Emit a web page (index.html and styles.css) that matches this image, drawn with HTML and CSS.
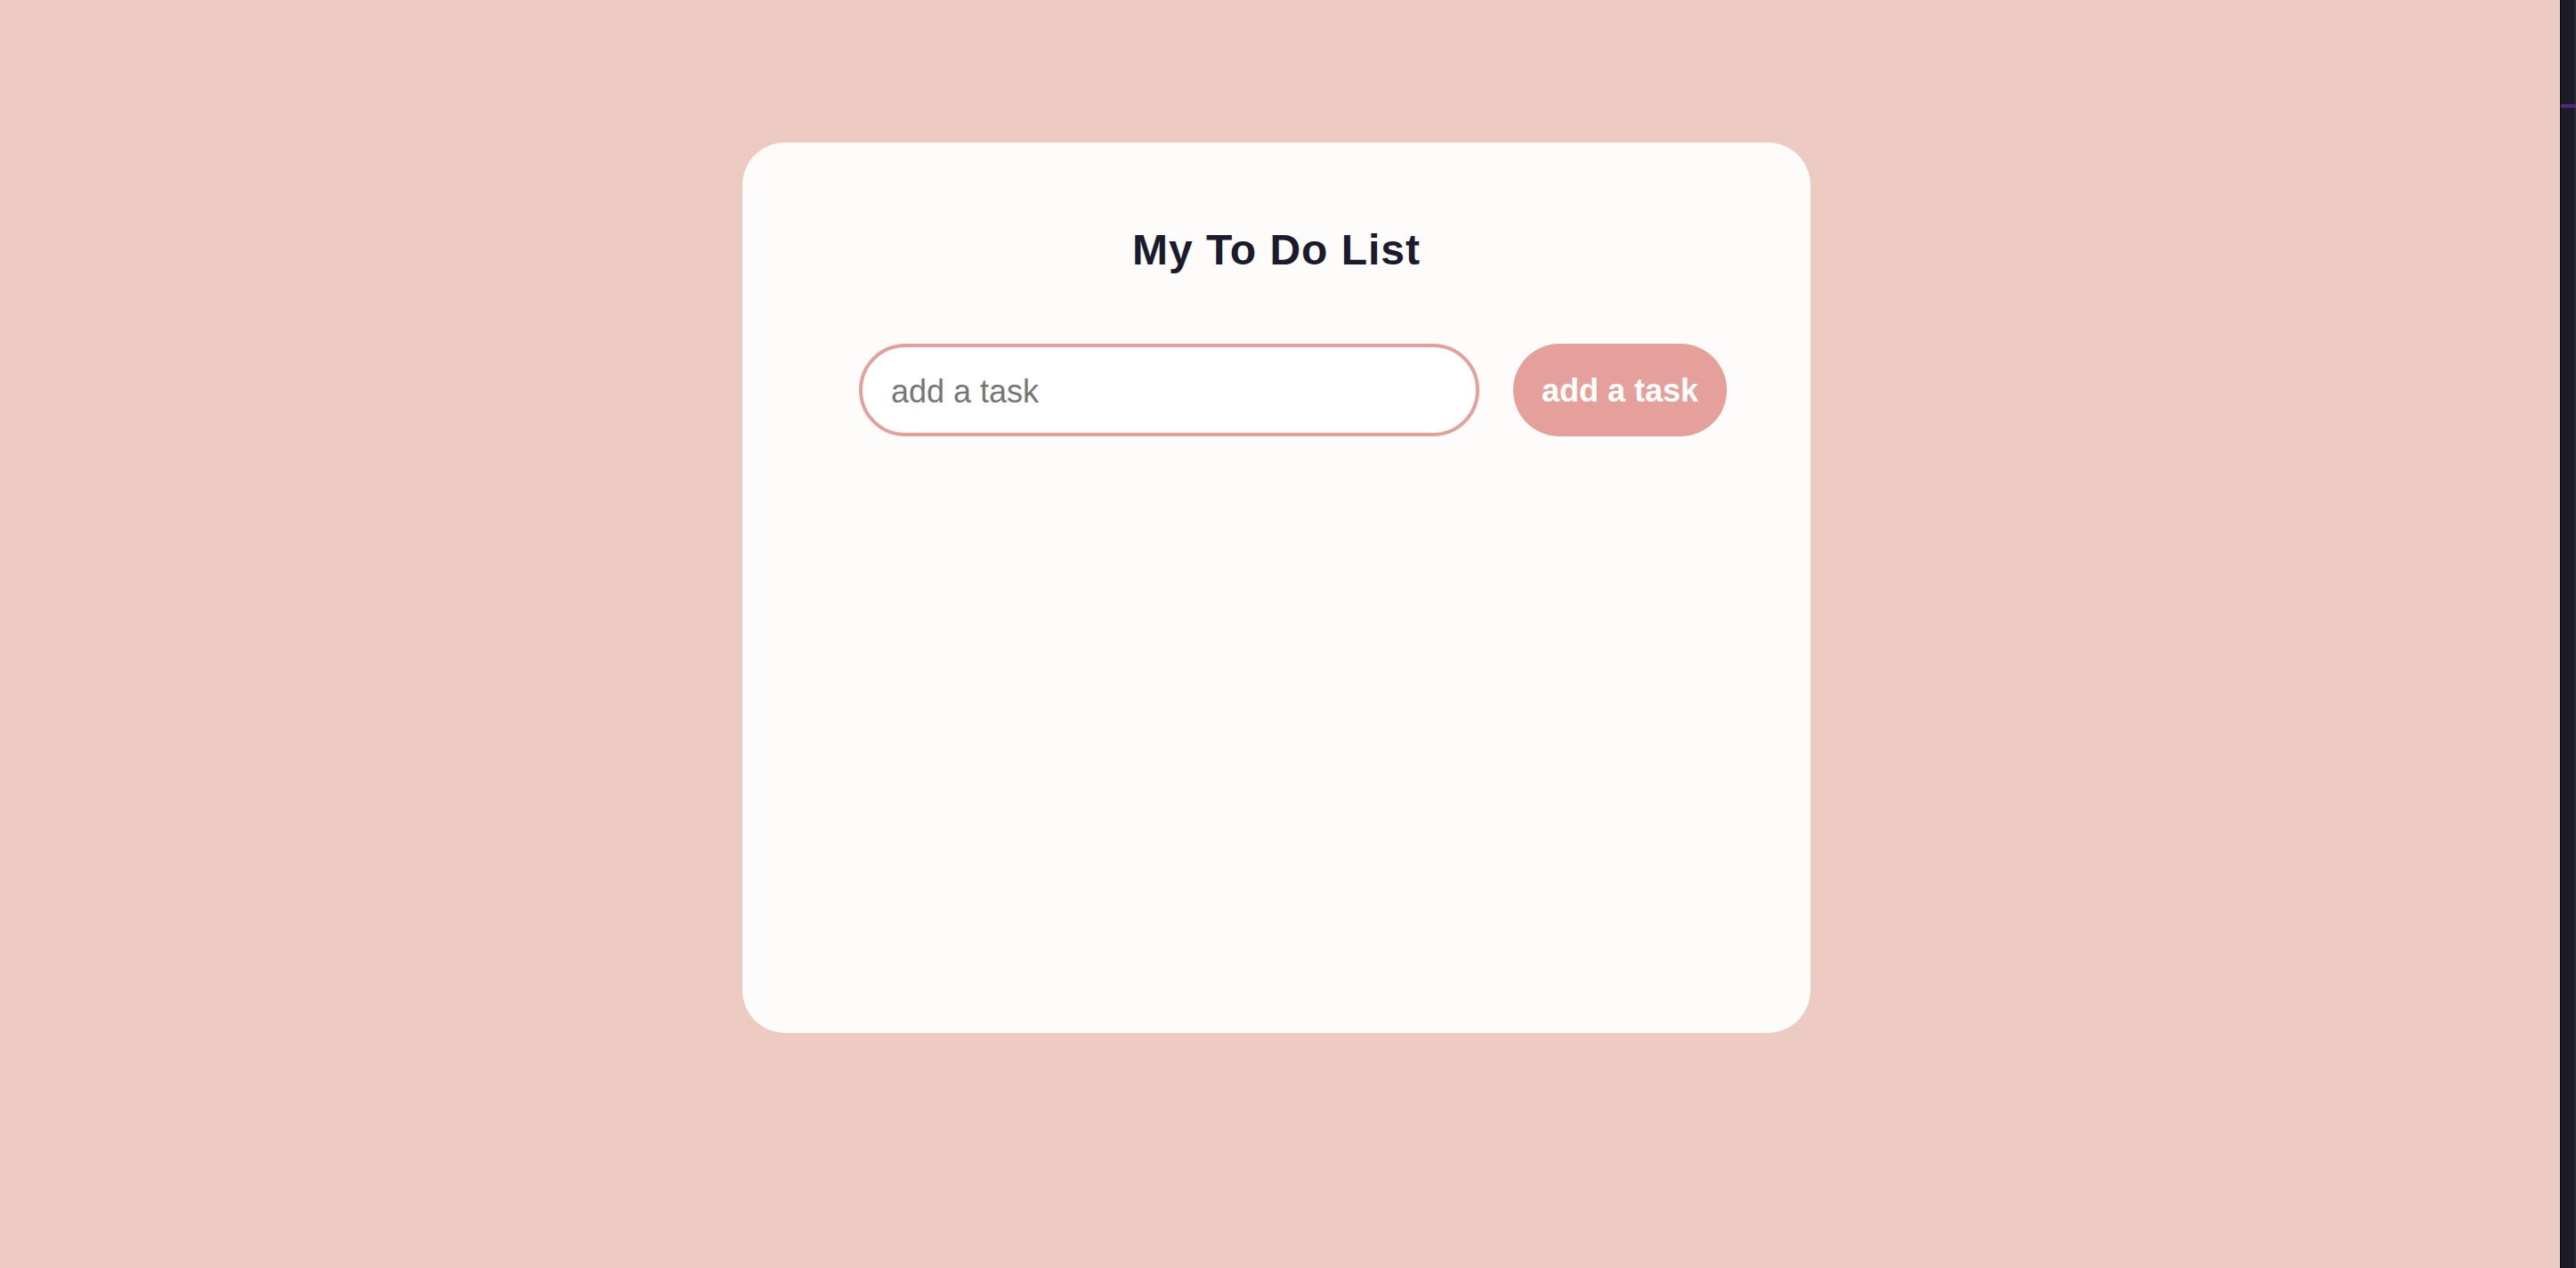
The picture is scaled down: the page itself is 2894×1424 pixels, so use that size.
FILE: index.html
```html
<!DOCTYPE html>
<html lang="en">
<head>
<meta charset="utf-8">
<title>My To Do List</title>
<link rel="stylesheet" href="styles.css">
</head>
<body>
<main class="page">
  <section class="card">
    <h1 class="title">My To Do List</h1>
    <form class="add-row" onsubmit="return false">
      <input class="task-input" type="text" placeholder="add a task">
      <button class="add-btn" type="submit">add a task</button>
    </form>
    <ul class="task-list"></ul>
  </section>
</main>
<aside class="side-strip"><div class="side-mark"></div></aside>
</body>
</html>
```
FILE: styles.css
```css
html, body {
  margin: 0;
  padding: 0;
  height: 100%;
}
body {
  display: flex;
  font-family: "Liberation Sans", Arial, Helvetica, sans-serif;
  background: #edcbc3;
  overflow: hidden;
}
.page {
  flex: 1;
  display: flex;
  justify-content: center;
  align-items: flex-start;
  padding: 160px 8px 0 0;
  background: #edcbc3;
}
.card {
  width: 1200px;
  height: 1000px;
  box-sizing: border-box;
  padding-top: 93px;
  background: #fefcfa;
  border-radius: 48px;
}
.title {
  margin: 0;
  font-size: 48px;
  font-weight: 700;
  line-height: 55px;
  letter-spacing: 1px;
  text-align: center;
  color: #1c1b2e;
}
.add-row {
  display: flex;
  gap: 38px;
  margin: 78px 0 0;
  padding-left: 131px;
}
.task-input {
  width: 697px;
  height: 104px;
  box-sizing: border-box;
  border: 4px solid #e5a09c;
  border-radius: 999px;
  padding: 4px 32px 0;
  background: #ffffff;
  font-family: "Liberation Sans", Arial, Helvetica, sans-serif;
  font-size: 36px;
  color: #333;
  outline: none;
}
.task-input::placeholder {
  color: #767676;
}
.add-btn {
  width: 240px;
  height: 104px;
  border: none;
  border-radius: 999px;
  background: #e5a09c;
  color: #ffffff;
  font-family: "Liberation Sans", Arial, Helvetica, sans-serif;
  font-size: 36px;
  font-weight: 700;
  padding: 2px 0 0;
  cursor: pointer;
}
.task-list {
  list-style: none;
  margin: 0;
  padding: 0;
}
.side-strip {
  width: 17px;
  flex: 0 0 17px;
  border-left: 1px solid #000;
  background: linear-gradient(to right, #1c1b28 15px, #2a2a35 15px);
}
.side-mark {
  margin-top: 117px;
  height: 4px;
  background: #52297c;
}
```
